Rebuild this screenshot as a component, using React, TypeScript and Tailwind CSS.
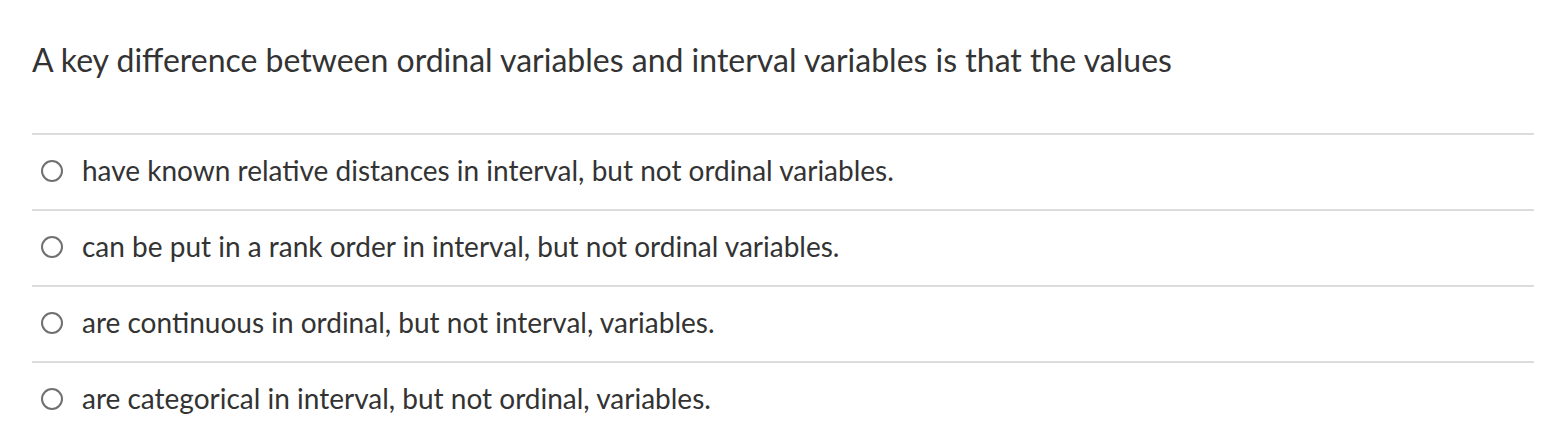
import React from 'react';

const options = [
  'have known relative distances in interval, but not ordinal variables.',
  'can be put in a rank order in interval, but not ordinal variables.',
  'are continuous in ordinal, but not interval, variables.',
  'are categorical in interval, but not ordinal, variables.',
];

export default function App() {
  return (
    <div className="w-[1548px] h-[444px] bg-white text-[#333] pl-[32px] pr-[14px]" style={{ fontFamily: 'Lato, "Noto Sans", sans-serif' }}>
      <div className="h-[133px] pt-[40px]">
        <p className="text-[32px] leading-[40px]">
          A key difference between ordinal variables and interval variables is that the values
        </p>
      </div>
      <div>
        {options.map((opt, i) => (
          <label key={i} className="flex items-center h-[76px] border-t-2 border-[#dcdcdc] pl-[9px] pb-[4px] gap-[19px]">
            <svg viewBox="0 0 22 22" className="w-[22px] h-[22px] min-w-[22px] shrink-0 mt-[2px]">
              <circle cx="11" cy="11" r="10" fill="white" stroke="#707070" strokeWidth="2" />
            </svg>
            <span className="text-[28px] leading-[34px]">{opt}</span>
          </label>
        ))}
      </div>
    </div>
  );
}
